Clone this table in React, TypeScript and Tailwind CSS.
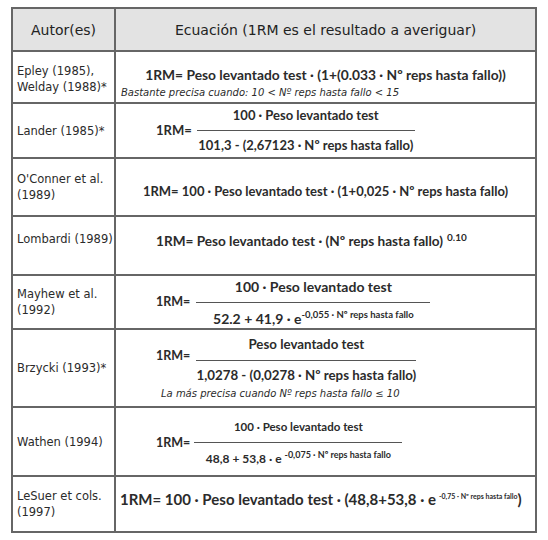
import React from "react";

const eq = "font-['Lato',sans-serif] font-bold text-[#2b2b2b]";
const note = "font-['DejaVu_Sans',sans-serif] italic text-[10px] text-[#2b2b2b]";

function Row({
  h,
  author,
  children,
  last,
  authorPad = "",
}: {
  h: string;
  author: React.ReactNode;
  children: React.ReactNode;
  last?: boolean;
  authorPad?: string;
}) {
  return (
    <div className={`flex ${h} ${last ? "" : "border-b-2 border-[#666]"}`}>
      <div
        className={`w-[103px] shrink-0 border-r-2 border-[#666] flex items-center pl-[4px] text-[11.5px] leading-[16px] text-[#2b2b2b] ${authorPad}`}
      >
        <div>{author}</div>
      </div>
      <div className="flex-1 min-w-0">{children}</div>
    </div>
  );
}

function Fraction({
  num,
  den,
  w,
  numCls,
  denCls,
  gap = "my-[5px]",
}: {
  num: React.ReactNode;
  den: React.ReactNode;
  w: string;
  numCls: string;
  denCls: string;
  gap?: string;
}) {
  return (
    <div className="flex flex-col items-center">
      <div className={numCls}>{num}</div>
      <div className={`${w} h-px bg-[#555] ${gap}`} />
      <div className={denCls}>{den}</div>
    </div>
  );
}

export default function App() {
  return (
    <div className="w-[548px] h-[540px] bg-white pt-[7px] pl-[11px]">
      <div className="w-[526px] border-2 border-[#666] font-['DejaVu_Sans',sans-serif]">
        {/* header */}
        <div className="flex h-[43px] bg-[#e3e3e3] border-b-2 border-[#666] text-[14px] text-[#222]">
          <div className="w-[103px] shrink-0 border-r-2 border-[#666] flex items-center justify-center pt-[2px]">
            Autor(es)
          </div>
          <div className="flex-1 flex items-center justify-center pt-[2px]">
            Ecuación (1RM es el resultado a averiguar)
          </div>
        </div>

        <Row h="h-[52px]" authorPad="pt-[4px]" author={<>Epley (1985),<br />Welday (1988)*</>}>
          <div className="h-full flex flex-col pt-[14px]">
            <div className={`${eq} text-[13.8px] leading-[17px] text-center`}>
              1RM= Peso levantado test · (1+(0.033 · Nº reps hasta fallo))
            </div>
            <div className={`${note} leading-[12px] pl-[5px] mt-[4px]`}>
              Bastante precisa cuando: 10 &lt; Nº reps hasta fallo &lt; 15
            </div>
          </div>
        </Row>

        <Row h="h-[55px]" author="Lander (1985)*">
          <div className="h-full flex items-center pl-[40px]">
            <div className={`${eq} text-[13px] mr-[5px]`}>1RM=</div>
            <Fraction
              w="w-[218px]"
              numCls={`${eq} text-[13px]`}
              denCls={`${eq} text-[13px]`}
              num="100 · Peso levantado test"
              den="101,3 - (2,67123 · Nº reps hasta fallo)"
            />
          </div>
        </Row>

        <Row h="h-[58px]" author={<>O'Conner et al.<br />(1989)</>}>
          <div className="h-full flex items-center justify-center pt-[10px]">
            <div className={`${eq} text-[13px]`}>
              1RM= 100 · Peso levantado test · (1+0,025 · Nº reps hasta fallo)
            </div>
          </div>
        </Row>

        <Row h="h-[59px]" authorPad="pb-[14px]" author="Lombardi (1989)">
          <div className="h-full flex items-center pl-[40px] pb-[8px]">
            <div className={`${eq} text-[13.6px] whitespace-nowrap`}>
              1RM= Peso levantado test · (Nº reps hasta fallo)
              <sup className="text-[10px] ml-[4px]">0.10</sup>
            </div>
          </div>
        </Row>

        <Row h="h-[54px]" author={<>Mayhew et al.<br />(1992)</>}>
          <div className="h-full flex items-center pl-[40px]">
            <div className={`${eq} text-[12.5px] mr-[6px]`}>1RM=</div>
            <Fraction
              w="w-[234px]"
              numCls={`${eq} text-[14px]`}
              denCls={`${eq} text-[14px]`}
              num="100 · Peso levantado test"
              den={
                <>
                  52.2 + 41,9 · e
                  <sup className="text-[9.5px] relative -top-[6px]">-0,055 · Nº reps hasta fallo</sup>
                </>
              }
            />
          </div>
        </Row>

        <Row h="h-[78px]" author="Brzycki (1993)*">
          <div className="h-full flex flex-col justify-center">
            <div className="flex items-center pl-[40px]">
              <div className={`${eq} text-[12.5px] mr-[6px] -mt-[8px]`}>1RM=</div>
              <Fraction
                w="w-[220px]"
                numCls={`${eq} text-[13.3px]`}
                denCls={`${eq} text-[13.3px]`}
                num="Peso levantado test"
                den="1,0278 - (0,0278 · Nº reps hasta fallo)"
              />
            </div>
            <div className={`${note} pl-[45px] mt-[0px]`}>
              La más precisa cuando Nº reps hasta fallo ≤ 10
            </div>
          </div>
        </Row>

        <Row h="h-[69px]" author="Wathen (1994)">
          <div className="h-full flex items-center pl-[40px] pt-[3px]">
            <div className={`${eq} text-[12.5px] mr-[4px]`}>1RM=</div>
            <Fraction
              w="w-[208px]"
              gap="mt-[6px] mb-[7px]"
              numCls={`${eq} text-[11.5px]`}
              denCls={`${eq} text-[12px]`}
              num="100 · Peso levantado test"
              den={
                <>
                  48,8 + 53,8 · e
                  <sup className="text-[9px] relative -top-[5px] ml-[3px]">-0,075 · Nº reps hasta fallo</sup>
                </>
              }
            />
          </div>
        </Row>

        <Row h="h-[54px]" author={<>LeSuer et cols.<br />(1997)</>} last>
          <div className="h-full flex items-center pl-[4px] pb-[10px]">
            <div className={`${eq} text-[15px] whitespace-nowrap`}>
              1RM= 100 · Peso levantado test · (48,8+53,8 · e
              <sup className="text-[7px] relative -top-[6px] ml-[3px]">-0,75 · Nº reps hasta fallo</sup>)
            </div>
          </div>
        </Row>
      </div>
    </div>
  );
}
